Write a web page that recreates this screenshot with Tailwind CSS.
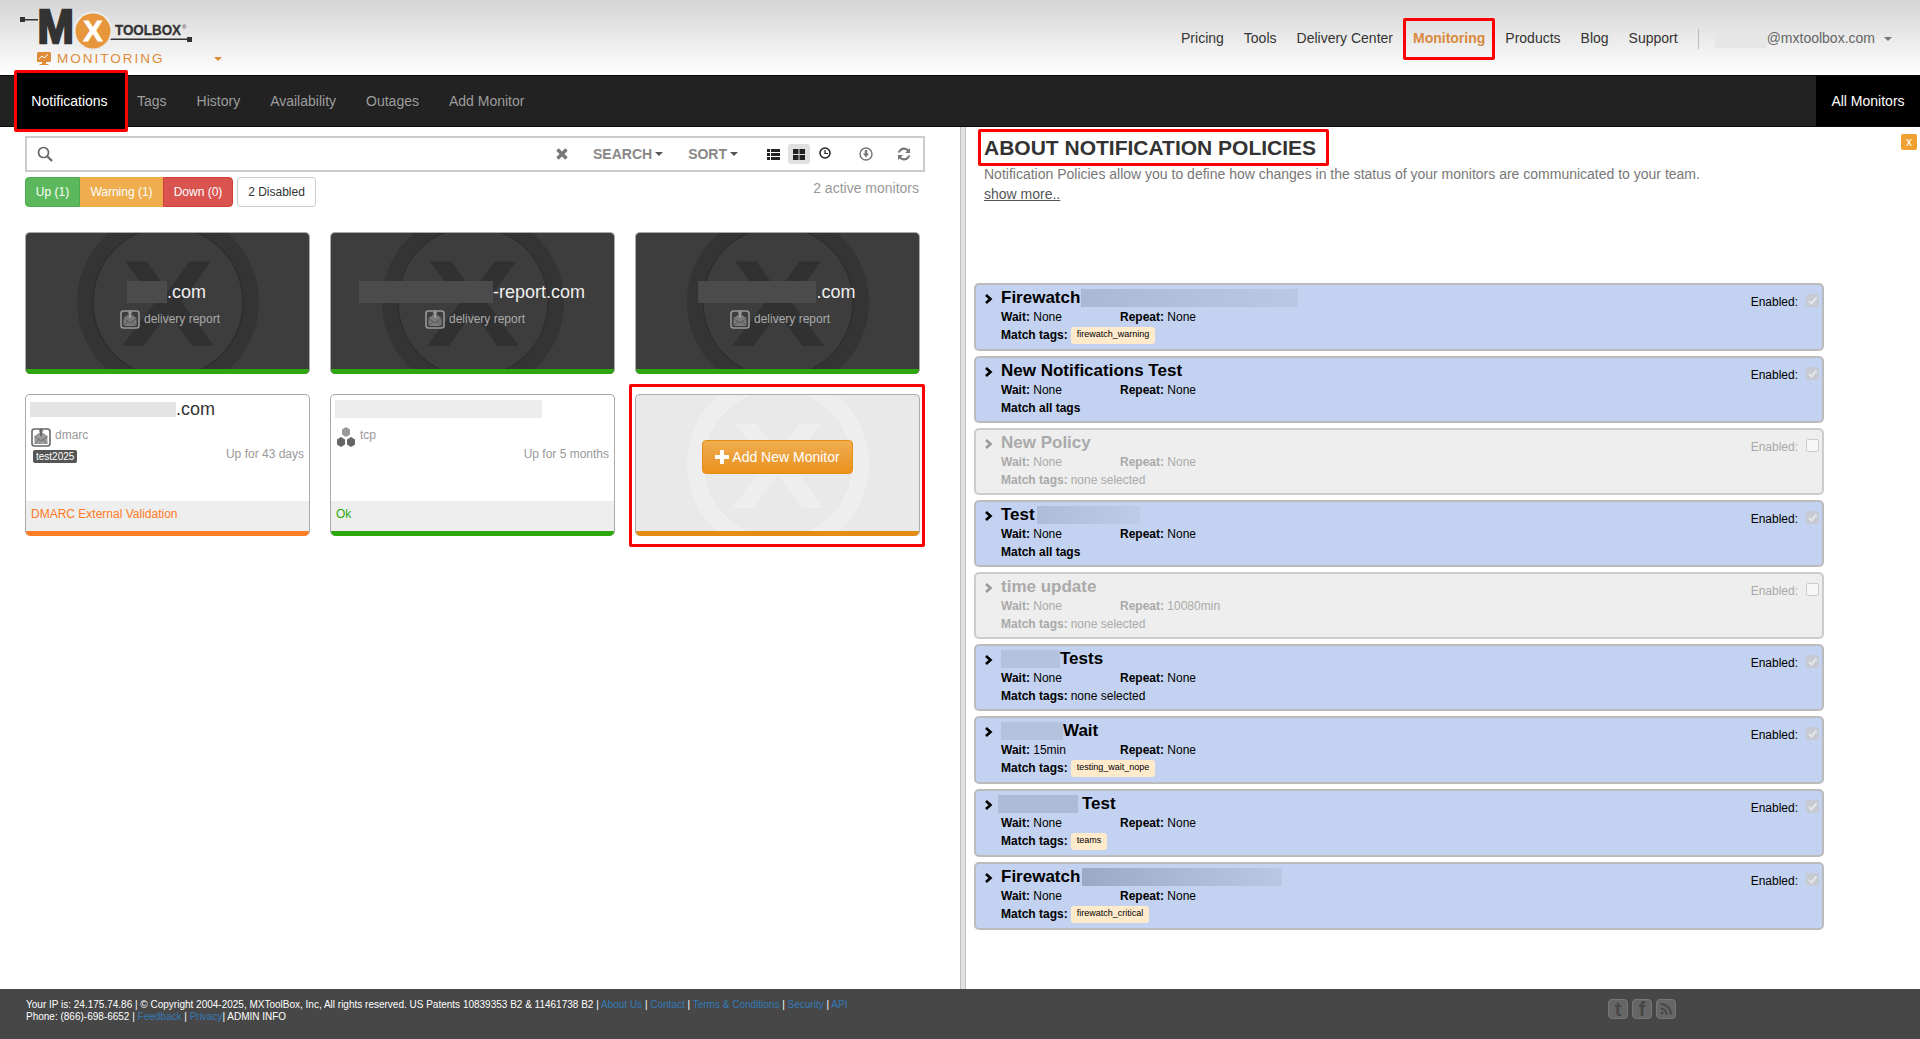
<!DOCTYPE html>
<html lang="en">
<head>
  <meta charset="UTF-8" />
  <title>MxToolbox Monitoring</title>
  <script src="https://cdn.jsdelivr.net/npm/@tailwindcss/browser@4"></script>
</head>
<body class="font-['Liberation_Sans',Arial,sans-serif] bg-white">
  <svg class="hidden">
    <defs>
      <symbol id="wm-dark" viewBox="0 0 285 142">
        <circle cx="142" cy="69" r="83" fill="none" stroke="#343434" stroke-width="16" />
        <circle cx="142" cy="69" r="75" fill="none" stroke="#2a2a2a" stroke-width="1" />
        <text x="0" y="113" font-family="Liberation Sans" font-weight="700" font-size="123" fill="#313131" text-anchor="middle" transform="translate(142 0) scale(1.15 1)">X</text>
      </symbol>
      <symbol id="wm-light" viewBox="0 0 285 142">
        <circle cx="142" cy="69" r="83" fill="none" stroke="#eeeeee" stroke-width="16" />
        <circle cx="142" cy="69" r="75" fill="none" stroke="#f3f3f3" stroke-width="1" />
        <text x="0" y="113" font-family="Liberation Sans" font-weight="700" font-size="123" fill="#eeeeee" text-anchor="middle" transform="translate(142 0) scale(1.15 1)">X</text>
      </symbol>
      <symbol id="mail" viewBox="0 0 20 20">
        <rect x="1" y="2" width="18" height="17" rx="2.5" fill="none" stroke="currentColor" stroke-width="1.6" />
        <path d="M3.5 9 10 4.5 16.5 9V17H3.5Z" fill="currentColor" opacity=".65" />
        <path d="M3.5 9.5 10 14 16.5 9.5M3.5 17 8 12.5M16.5 17 12 12.5" fill="none" stroke="#000" stroke-opacity=".35" stroke-width=".8" />
        <path d="M10 1 12.5 4.5H11V9H9V4.5H7.5Z" fill="currentColor" />
      </symbol>
      <symbol id="chev" viewBox="0 0 9 10">
        <path d="M2 1 6.5 5 2 9" fill="none" stroke="currentColor" stroke-width="2.6" />
      </symbol>
      <symbol id="tick" viewBox="0 0 13 13">
        <path d="M3 7 5.5 9.5 10.5 3.5" fill="none" stroke="#e6e6e6" stroke-width="2" />
      </symbol>
    </defs>
  </svg>

  <div class="w-[1920px] h-[1039px] flex flex-col overflow-hidden">
    <!-- top header -->
    <header class="h-[75px] shrink-0 flex justify-between bg-gradient-to-b from-[#d5d5d5] to-white">
      <div class="relative w-[240px]">
        <svg width="240" height="75" viewBox="0 0 240 75" class="block">
          <rect x="20" y="17" width="5" height="5" fill="#333" />
          <rect x="24" y="19" width="14" height="1.5" fill="#333" />
          <text x="0" y="42.5" font-family="Liberation Sans" font-weight="700" font-size="47.5" fill="#333" stroke="#333" stroke-width="2.4" transform="translate(37.5 0) scale(.92 1)">M</text>
          <rect x="110" y="38.5" width="80" height="1.5" fill="#333" />
          <rect x="187" y="37" width="5" height="5" fill="#333" />
          <circle cx="93" cy="31" r="19.5" fill="#ececec" />
          <circle cx="93" cy="31" r="17.5" fill="#e8963c" />
          <text x="93" y="41" font-family="Liberation Sans" font-weight="700" font-size="29" fill="#fff" stroke="#fff" stroke-width=".8" text-anchor="middle">X</text>
          <text x="115" y="35" font-family="Liberation Sans" font-weight="700" font-size="14" fill="#333" stroke="#333" stroke-width=".3" textLength="66" lengthAdjust="spacingAndGlyphs">TOOLBOX</text>
          <text x="182" y="29" font-family="Liberation Sans" font-size="6" fill="#333">®</text>
          <rect x="37" y="52" width="14" height="10" rx="1.5" fill="#e08b3a" />
          <path d="M39 59 42 56 44 58 48 54.5" fill="none" stroke="#fff" stroke-width="1" />
          <rect x="42" y="62" width="4" height="2" fill="#e08b3a" />
          <rect x="39.5" y="64" width="9" height="1" fill="#e08b3a" />
          <text x="57" y="63" font-family="Liberation Sans" font-size="13.5" fill="#e08b3a" letter-spacing="2">MONITORING</text>
          <path d="M214 57H222L218 61Z" fill="#e08b3a" />
        </svg>
      </div>
      <nav class="flex items-center text-[14px] text-[#333] pr-[28px] pt-[2px]">
        <a class="mr-[20px]">Pricing</a>
        <a class="mr-[20px]">Tools</a>
        <a class="mr-[10px]">Delivery Center</a>
        <a class="h-[42px] px-[7px] mr-[10px] flex items-center font-bold text-[#d9893d] border-[3px] border-[#f00] rounded-[2px]">Monitoring</a>
        <a class="mr-[20px]">Products</a>
        <a class="mr-[20px]">Blog</a>
        <a>Support</a>
        <span class="w-px h-[20px] bg-[#bbb] ml-[20px] mr-[16px]"></span>
        <span class="w-[52px] h-[18px] bg-[#e6e6e6]"></span>
        <span class="text-[#666]">@mxtoolbox.com</span>
        <span class="ml-[9px] border-x-[4px] border-t-[4px] border-x-transparent border-t-[#777]"></span>
      </nav>
    </header>

    <!-- sub nav -->
    <nav class="relative h-[52px] shrink-0 flex items-center justify-between bg-[#222] border-y border-[#080808] text-[14px] text-[#9d9d9d]">
      <div class="flex items-center h-full">
        <a class="relative z-10 ml-[14px] mr-[9px] w-[114px] h-[62px] flex items-center justify-center pr-[3px] bg-black text-white border-[3px] border-[#f00] rounded-[2px]">Notifications</a>
        <a class="mr-[30px]">Tags</a>
        <a class="mr-[30px]">History</a>
        <a class="mr-[30px]">Availability</a>
        <a class="mr-[30px]">Outages</a>
        <a>Add Monitor</a>
      </div>
      <a class="h-full w-[104px] flex items-center justify-center bg-black text-white">All Monitors</a>
    </nav>

    <main class="flex-1 min-h-0 flex">
      <!-- monitors column -->
      <section class="w-[960px] shrink-0 pl-[25px] pt-[9px]">
        <div class="w-[900px] h-[36px] flex items-center border-2 border-[#ccc] text-[#888]">
          <svg class="ml-[10px] w-[16px] h-[16px]" viewBox="0 0 16 16" fill="none" stroke="#666" stroke-width="1.7"><circle cx="6.5" cy="6.5" r="5" /><path d="M10.5 10.5 15 15" stroke-width="2.2" /></svg>
          <svg class="ml-[503px] w-[12px] h-[12px]" viewBox="0 0 12 12" fill="none" stroke="#777" stroke-width="3.4"><path d="M1.5 1.5 10.5 10.5M10.5 1.5 1.5 10.5" /></svg>
          <span class="ml-[25px] text-[14px] font-bold">SEARCH</span>
          <span class="ml-[3px] border-x-[4px] border-t-[4px] border-x-transparent border-t-[#555]"></span>
          <span class="ml-[25px] text-[14px] font-bold">SORT</span>
          <span class="ml-[3px] border-x-[4px] border-t-[4px] border-x-transparent border-t-[#555]"></span>
          <svg class="ml-[29px] w-[13px] h-[11px]" viewBox="0 0 13 11" fill="#222"><rect width="3" height="3" /><rect x="4" width="9" height="3" /><rect y="4" width="3" height="3" /><rect x="4" y="4" width="9" height="3" /><rect y="8" width="3" height="3" /><rect x="4" y="8" width="9" height="3" /></svg>
          <span class="ml-[8px] w-[22px] h-[20px] flex items-center justify-center bg-[#e0e0e0] rounded-[3px]">
            <svg class="w-[12px] h-[11px]" viewBox="0 0 12 11" fill="#222"><rect width="5.5" height="5" /><rect x="6.5" width="5.5" height="5" /><rect y="6" width="5.5" height="5" /><rect x="6.5" y="6" width="5.5" height="5" /></svg>
          </span>
          <svg class="ml-[9px] w-[12px] h-[12px] mb-[2px]" viewBox="0 0 12 12" fill="none" stroke="#222" stroke-width="1.5"><circle cx="6" cy="6" r="5" /><path d="M6 3V6.5H9" stroke-width="1.2" /></svg>
          <svg class="ml-[28px] w-[14px] h-[14px]" viewBox="0 0 14 14" fill="none" stroke="#777" stroke-width="1.5"><circle cx="7" cy="7" r="6" /><path d="M5.8 3H8.2V6.5H10L7 10.5 4 6.5H5.8Z" fill="#777" stroke="none" /></svg>
          <svg class="ml-[24px] w-[14px] h-[14px]" viewBox="0 0 14 14" fill="none" stroke="#777" stroke-width="2"><path d="M12 5.5A5.2 5.2 0 0 0 3 3.5L1.5 5.5M2 8.5A5.2 5.2 0 0 0 11 10.5L12.5 8.5" /><path d="M13 1V6H8ZM1 13V8H6Z" fill="#777" stroke="none" /></svg>
        </div>

        <div class="mt-[5px] w-[894px] h-[30px] flex items-center text-[12px] text-white">
          <span class="shrink-0 w-[55px] h-[30px] flex items-center justify-center bg-[#5cb85c] border border-[#4cae4c] rounded-l-[4px]">Up (1)</span>
          <span class="shrink-0 w-[83px] h-[30px] flex items-center justify-center bg-[#f0ad4e]">Warning (1)</span>
          <span class="shrink-0 w-[70px] h-[30px] flex items-center justify-center bg-[#d9534f] border border-[#d43f3a] rounded-r-[4px]">Down (0)</span>
          <span class="shrink-0 ml-[4px] w-[79px] h-[30px] flex items-center justify-center bg-white text-[#333] border border-[#ccc] rounded-[3px]">2 Disabled</span>
          <span class="ml-auto mb-[7px] text-[14px] text-[#999] whitespace-nowrap">2 active monitors</span>
        </div>

        <div class="mt-[25px] grid grid-cols-[285px_285px_285px] auto-rows-[142px] gap-x-[20px] gap-y-[20px]">
          <!-- dark cards -->
          <div class="relative overflow-hidden flex flex-col bg-[#3d3d3d] border border-[#aaa] border-b-0 rounded-[5px]">
            <svg class="absolute left-0 top-0 w-[285px] h-[142px]"><use href="#wm-dark" /></svg>
            <div class="relative flex-1 flex flex-col items-center pt-[46px]">
              <div class="h-[26px] -ml-[2px] flex items-center text-[18px] text-[#eee]"><span class="w-[40px] h-[22px] bg-[#4b4b4b]"></span>.com</div>
              <div class="mt-[4px] ml-[5px] flex items-center text-[12px] text-[#aaa]"><svg class="w-[20px] h-[20px] text-[#999]"><use href="#mail" /></svg><span class="ml-[4px]">delivery report</span></div>
            </div>
            <div class="relative h-[5px] bg-[#2ca80e]"></div>
          </div>
          <div class="relative overflow-hidden flex flex-col bg-[#3d3d3d] border border-[#aaa] border-b-0 rounded-[5px]">
            <svg class="absolute left-0 top-0 w-[285px] h-[142px]"><use href="#wm-dark" /></svg>
            <div class="relative flex-1 flex flex-col items-center pt-[46px]">
              <div class="h-[26px] -ml-[1px] flex items-center text-[18px] text-[#eee]"><span class="w-[134px] h-[22px] bg-[#4b4b4b]"></span>-report.com</div>
              <div class="mt-[4px] ml-[5px] flex items-center text-[12px] text-[#aaa]"><svg class="w-[20px] h-[20px] text-[#999]"><use href="#mail" /></svg><span class="ml-[4px]">delivery report</span></div>
            </div>
            <div class="relative h-[5px] bg-[#2ca80e]"></div>
          </div>
          <div class="relative overflow-hidden flex flex-col bg-[#3d3d3d] border border-[#aaa] border-b-0 rounded-[5px]">
            <svg class="absolute left-0 top-0 w-[285px] h-[142px]"><use href="#wm-dark" /></svg>
            <div class="relative flex-1 flex flex-col items-center pt-[46px]">
              <div class="h-[26px] -ml-[1px] flex items-center text-[18px] text-[#eee]"><span class="w-[118px] h-[22px] bg-[#4b4b4b]"></span>.com</div>
              <div class="mt-[4px] ml-[5px] flex items-center text-[12px] text-[#aaa]"><svg class="w-[20px] h-[20px] text-[#999]"><use href="#mail" /></svg><span class="ml-[4px]">delivery report</span></div>
            </div>
            <div class="relative h-[5px] bg-[#2ca80e]"></div>
          </div>

          <!-- light cards -->
          <div class="flex flex-col bg-white border border-[#aaa] border-b-0 rounded-[5px] overflow-hidden">
            <div class="flex-1 pl-[4px] pr-[4px]">
              <div class="mt-[6px] h-[16px] flex items-center text-[18px] text-[#333]"><span class="w-[146px] h-[15px] bg-[#e4e4e4]"></span>.com</div>
              <div class="mt-[10px] flex text-[12px] text-[#999]">
                <svg class="ml-[1px] w-[20px] h-[20px] text-[#666]"><use href="#mail" /></svg><span class="ml-[4px] leading-[16px]">dmarc</span>
              </div>
              <div class="flex items-start justify-between">
                <span class="ml-[3px] mt-[3px] h-[13px] px-[3px] flex items-center bg-[#555] text-white text-[10px] rounded-[2px]">test2025</span>
                <span class="text-[12px] leading-[14px] text-[#999] pr-px">Up for 43 days</span>
              </div>
            </div>
            <div class="h-[30px] pl-[5px] pb-[5px] flex items-center bg-[#eee] text-[12px] text-[#ff7a22]">DMARC External Validation</div>
            <div class="h-[5px] bg-[#ff7b25]"></div>
          </div>
          <div class="flex flex-col bg-white border border-[#aaa] border-b-0 rounded-[5px] overflow-hidden">
            <div class="flex-1 pl-[4px] pr-[4px]">
              <div class="mt-[5px] w-[207px] h-[18px] bg-[#ececec]"></div>
              <div class="mt-[9px] flex text-[12px] text-[#999]">
                <svg class="ml-[1px] w-[20px] h-[20px]" viewBox="0 0 20 20" fill="#666"><path d="M10 0 14 2.5V7.5L10 10 6 7.5V2.5Z" fill="#999" /><path d="M5 10 9 12.5V17.5L5 20 1 17.5V12.5Z" /><path d="M15 10 19 12.5V17.5L15 20 11 17.5V12.5Z" /></svg><span class="ml-[4px] leading-[16px]">tcp</span>
              </div>
              <div class="text-right text-[12px] leading-[14px] text-[#999] pr-[1px]">Up for 5 months</div>
            </div>
            <div class="h-[30px] pl-[5px] pb-[5px] flex items-center bg-[#eee] text-[12px] text-[#2ca80e]">Ok</div>
            <div class="h-[5px] bg-[#2ca80e]"></div>
          </div>
          <div class="relative">
            <div class="h-full relative overflow-hidden flex flex-col bg-[#e9e9e9] border border-[#aaa] border-b-0 rounded-[5px]">
              <svg class="absolute left-0 top-0 w-[285px] h-[142px]"><use href="#wm-light" /></svg>
              <div class="relative flex-1 flex items-start justify-center pt-[45px]">
                <a class="w-[151px] h-[34px] flex items-center justify-center gap-[3px] bg-gradient-to-b from-[#f0ad4e] to-[#ea9119] border border-[#e38d13] rounded-[4px] text-[14px] text-white">
                  <svg class="w-[14px] h-[14px]" viewBox="0 0 14 14" fill="#fff"><path d="M5 0H9V5H14V9H9V14H5V9H0V5H5Z" /></svg>Add New Monitor
                </a>
              </div>
              <div class="relative h-[5px] bg-[#e38d13]"></div>
            </div>
            <span class="absolute left-[-6px] right-[-5px] top-[-10px] bottom-[-11px] border-[3px] border-[#f00] rounded-[2px]"></span>
          </div>
        </div>
      </section>

      <div class="w-[6px] shrink-0 bg-[#e2e2e2] border-x border-[#c0c0c0]"></div>

      <!-- policies column -->
      <section class="relative flex-1 min-w-0 pl-[8px] pt-[2px]">
        <span class="absolute right-[3px] top-[7px] w-[16px] h-[16px] flex items-center justify-center bg-[#f0a030] rounded-[2px] text-[12px] leading-none text-white">x</span>
        <h1 class="ml-[4px] w-[351px] h-[37px] flex items-center pl-[3px] border-[3px] border-[#f00] rounded-[2px] text-[21px] font-bold text-[#333] whitespace-nowrap">ABOUT NOTIFICATION POLICIES</h1>
        <p class="ml-[10px] -mt-[2px] text-[14px] leading-[20px] text-[#777]">Notification Policies allow you to define how changes in the status of your monitors are communicated to your team.</p>
        <a class="block ml-[10px] text-[14px] leading-[20px] text-[#555] underline">show more..</a>

        <div class="mt-[79px] w-[850px] flex flex-col gap-[5px] text-[12px] text-black">
          <div class="h-[68px] flex bg-[#c3d2f0] border-2 border-[#bbb] rounded-[5px]">
            <svg class="ml-[8px] mt-[9px] w-[9px] h-[10px] text-black"><use href="#chev" /></svg>
            <div class="ml-[8px] pt-[3px]">
              <div class="h-[20px] flex items-center text-[17px] font-bold">Firewatch<span class="ml-px w-[217px] h-[18px] bg-gradient-to-r from-[#a9b8d4] to-[#b9c8e4]"></span></div>
              <div class="flex leading-[18px]"><span class="w-[119px]"><b>Wait:</b> None</span><span><b>Repeat:</b> None</span></div>
              <div class="flex items-center h-[18px]"><b>Match tags:</b><span class="ml-[3px] h-[17px] px-[6px] flex items-center bg-[#ffeacc] rounded-[3px] text-[9px]">firewatch_warning</span></div>
            </div>
            <div class="ml-auto mr-[3px] mt-[8px] flex items-start"><span class="leading-[18px]">Enabled:</span><span class="ml-[8px] mt-[1px] w-[13px] h-[13px] bg-[#c6cad2] rounded-[2px]"><svg class="block w-[13px] h-[13px]"><use href="#tick" /></svg></span></div>
          </div>
          <div class="h-[67px] flex bg-[#c3d2f0] border-2 border-[#bbb] rounded-[5px]">
            <svg class="ml-[8px] mt-[9px] w-[9px] h-[10px] text-black"><use href="#chev" /></svg>
            <div class="ml-[8px] pt-[3px]">
              <div class="h-[20px] flex items-center text-[17px] font-bold">New Notifications Test</div>
              <div class="flex leading-[18px]"><span class="w-[119px]"><b>Wait:</b> None</span><span><b>Repeat:</b> None</span></div>
              <div class="flex items-center h-[18px]"><b>Match all tags</b></div>
            </div>
            <div class="ml-auto mr-[3px] mt-[8px] flex items-start"><span class="leading-[18px]">Enabled:</span><span class="ml-[8px] mt-[1px] w-[13px] h-[13px] bg-[#c6cad2] rounded-[2px]"><svg class="block w-[13px] h-[13px]"><use href="#tick" /></svg></span></div>
          </div>
          <div class="h-[67px] flex bg-[#eee] border-2 border-[#ccc] rounded-[5px] text-[#aaa]">
            <svg class="ml-[8px] mt-[9px] w-[9px] h-[10px] text-[#999]"><use href="#chev" /></svg>
            <div class="ml-[8px] pt-[3px]">
              <div class="h-[20px] flex items-center text-[17px] font-bold">New Policy</div>
              <div class="flex leading-[18px]"><span class="w-[119px]"><b>Wait:</b> None</span><span><b>Repeat:</b> None</span></div>
              <div class="flex items-center h-[18px]"><b>Match tags:</b><span class="ml-[3px]">none selected</span></div>
            </div>
            <div class="ml-auto mr-[3px] mt-[8px] flex items-start"><span class="leading-[18px]">Enabled:</span><span class="ml-[8px] mt-[1px] w-[13px] h-[13px] bg-white/50 border border-[#ccc] rounded-[2px]"></span></div>
          </div>
          <div class="h-[67px] flex bg-[#c3d2f0] border-2 border-[#bbb] rounded-[5px]">
            <svg class="ml-[8px] mt-[9px] w-[9px] h-[10px] text-black"><use href="#chev" /></svg>
            <div class="ml-[8px] pt-[3px]">
              <div class="h-[20px] flex items-center text-[17px] font-bold">Test<span class="ml-[2px] w-[103px] h-[18px] bg-gradient-to-r from-[#adbcd8] to-[#bccbe7]"></span></div>
              <div class="flex leading-[18px]"><span class="w-[119px]"><b>Wait:</b> None</span><span><b>Repeat:</b> None</span></div>
              <div class="flex items-center h-[18px]"><b>Match all tags</b></div>
            </div>
            <div class="ml-auto mr-[3px] mt-[8px] flex items-start"><span class="leading-[18px]">Enabled:</span><span class="ml-[8px] mt-[1px] w-[13px] h-[13px] bg-[#c6cad2] rounded-[2px]"><svg class="block w-[13px] h-[13px]"><use href="#tick" /></svg></span></div>
          </div>
          <div class="h-[67px] flex bg-[#eee] border-2 border-[#ccc] rounded-[5px] text-[#aaa]">
            <svg class="ml-[8px] mt-[9px] w-[9px] h-[10px] text-[#999]"><use href="#chev" /></svg>
            <div class="ml-[8px] pt-[3px]">
              <div class="h-[20px] flex items-center text-[17px] font-bold">time update</div>
              <div class="flex leading-[18px]"><span class="w-[119px]"><b>Wait:</b> None</span><span><b>Repeat:</b> 10080min</span></div>
              <div class="flex items-center h-[18px]"><b>Match tags:</b><span class="ml-[3px]">none selected</span></div>
            </div>
            <div class="ml-auto mr-[3px] mt-[8px] flex items-start"><span class="leading-[18px]">Enabled:</span><span class="ml-[8px] mt-[1px] w-[13px] h-[13px] bg-white/50 border border-[#ccc] rounded-[2px]"></span></div>
          </div>
          <div class="h-[67px] flex bg-[#c3d2f0] border-2 border-[#bbb] rounded-[5px]">
            <svg class="ml-[8px] mt-[9px] w-[9px] h-[10px] text-black"><use href="#chev" /></svg>
            <div class="ml-[8px] pt-[3px]">
              <div class="h-[20px] flex items-center text-[17px] font-bold"><span class="w-[59px] h-[18px] bg-[#b3c2dd]"></span>Tests</div>
              <div class="flex leading-[18px]"><span class="w-[119px]"><b>Wait:</b> None</span><span><b>Repeat:</b> None</span></div>
              <div class="flex items-center h-[18px]"><b>Match tags:</b><span class="ml-[3px]">none selected</span></div>
            </div>
            <div class="ml-auto mr-[3px] mt-[8px] flex items-start"><span class="leading-[18px]">Enabled:</span><span class="ml-[8px] mt-[1px] w-[13px] h-[13px] bg-[#c6cad2] rounded-[2px]"><svg class="block w-[13px] h-[13px]"><use href="#tick" /></svg></span></div>
          </div>
          <div class="h-[68px] flex bg-[#c3d2f0] border-2 border-[#bbb] rounded-[5px]">
            <svg class="ml-[8px] mt-[9px] w-[9px] h-[10px] text-black"><use href="#chev" /></svg>
            <div class="ml-[8px] pt-[3px]">
              <div class="h-[20px] flex items-center text-[17px] font-bold"><span class="w-[62px] h-[18px] bg-[#b3c2dd]"></span>Wait</div>
              <div class="flex leading-[18px]"><span class="w-[119px]"><b>Wait:</b> 15min</span><span><b>Repeat:</b> None</span></div>
              <div class="flex items-center h-[18px]"><b>Match tags:</b><span class="ml-[3px] h-[17px] px-[6px] flex items-center bg-[#ffeacc] rounded-[3px] text-[9px]">testing_wait_nope</span></div>
            </div>
            <div class="ml-auto mr-[3px] mt-[8px] flex items-start"><span class="leading-[18px]">Enabled:</span><span class="ml-[8px] mt-[1px] w-[13px] h-[13px] bg-[#c6cad2] rounded-[2px]"><svg class="block w-[13px] h-[13px]"><use href="#tick" /></svg></span></div>
          </div>
          <div class="h-[68px] flex bg-[#c3d2f0] border-2 border-[#bbb] rounded-[5px]">
            <svg class="ml-[8px] mt-[9px] w-[9px] h-[10px] text-black"><use href="#chev" /></svg>
            <div class="ml-[8px] pt-[3px]">
              <div class="h-[20px] flex items-center text-[17px] font-bold"><span class="-ml-[3px] mr-[4px] w-[80px] h-[18px] bg-[#acbbd6]"></span>Test</div>
              <div class="flex leading-[18px]"><span class="w-[119px]"><b>Wait:</b> None</span><span><b>Repeat:</b> None</span></div>
              <div class="flex items-center h-[18px]"><b>Match tags:</b><span class="ml-[3px] h-[17px] px-[6px] flex items-center bg-[#ffeacc] rounded-[3px] text-[9px]">teams</span></div>
            </div>
            <div class="ml-auto mr-[3px] mt-[8px] flex items-start"><span class="leading-[18px]">Enabled:</span><span class="ml-[8px] mt-[1px] w-[13px] h-[13px] bg-[#c6cad2] rounded-[2px]"><svg class="block w-[13px] h-[13px]"><use href="#tick" /></svg></span></div>
          </div>
          <div class="h-[68px] flex bg-[#c3d2f0] border-2 border-[#bbb] rounded-[5px]">
            <svg class="ml-[8px] mt-[9px] w-[9px] h-[10px] text-black"><use href="#chev" /></svg>
            <div class="ml-[8px] pt-[3px]">
              <div class="h-[20px] flex items-center text-[17px] font-bold">Firewatch<span class="ml-[2px] w-[200px] h-[18px] bg-gradient-to-r from-[#9ba9c5] via-[#aab9d5] to-[#b8c7e3]"></span></div>
              <div class="flex leading-[18px]"><span class="w-[119px]"><b>Wait:</b> None</span><span><b>Repeat:</b> None</span></div>
              <div class="flex items-center h-[18px]"><b>Match tags:</b><span class="ml-[3px] h-[17px] px-[6px] flex items-center bg-[#ffeacc] rounded-[3px] text-[9px]">firewatch_critical</span></div>
            </div>
            <div class="ml-auto mr-[3px] mt-[8px] flex items-start"><span class="leading-[18px]">Enabled:</span><span class="ml-[8px] mt-[1px] w-[13px] h-[13px] bg-[#c6cad2] rounded-[2px]"><svg class="block w-[13px] h-[13px]"><use href="#tick" /></svg></span></div>
          </div>
        </div>
      </section>
    </main>

    <footer class="h-[50px] shrink-0 flex bg-[#474747] text-[10px] leading-[12px] text-white pl-[26px] pt-[10px]">
      <div class="w-[1582px]">
        <div>Your IP is: 24.175.74.86 | © Copyright 2004-2025, MXToolBox, Inc, All rights reserved. US Patents 10839353 B2 &amp; 11461738 B2 | <a class="text-[#337ab7]">About Us</a> | <a class="text-[#337ab7]">Contact</a> | <a class="text-[#337ab7]">Terms &amp; Conditions</a> | <a class="text-[#337ab7]">Security</a> | <a class="text-[#337ab7]">API</a></div>
        <div>Phone: (866)-698-6652 | <a class="text-[#337ab7]">Feedback</a> | <a class="text-[#337ab7]">Privacy</a>| ADMIN INFO</div>
      </div>
      <div class="flex gap-[4px] h-[20px]">
        <span class="w-[20px] h-[20px] flex items-center justify-center bg-[#666] border border-[#777] rounded-[4px] text-[20px] font-bold text-[#474747]">t</span>
        <span class="w-[20px] h-[20px] flex items-center justify-center bg-[#666] border border-[#777] rounded-[4px] text-[20px] font-bold text-[#474747]">f</span>
        <span class="w-[20px] h-[20px] flex items-center justify-center bg-[#666] border border-[#777] rounded-[4px]">
          <svg class="w-[14px] h-[14px]" viewBox="0 0 14 14" fill="none" stroke="#474747" stroke-width="2"><circle cx="3" cy="11" r="1.5" fill="#474747" stroke="none" /><path d="M1.5 6.5A6 6 0 0 1 7.5 12.5M1.5 2A10.5 10.5 0 0 1 12 12.5" /></svg>
        </span>
      </div>
    </footer>
  </div>
</body>
</html>
